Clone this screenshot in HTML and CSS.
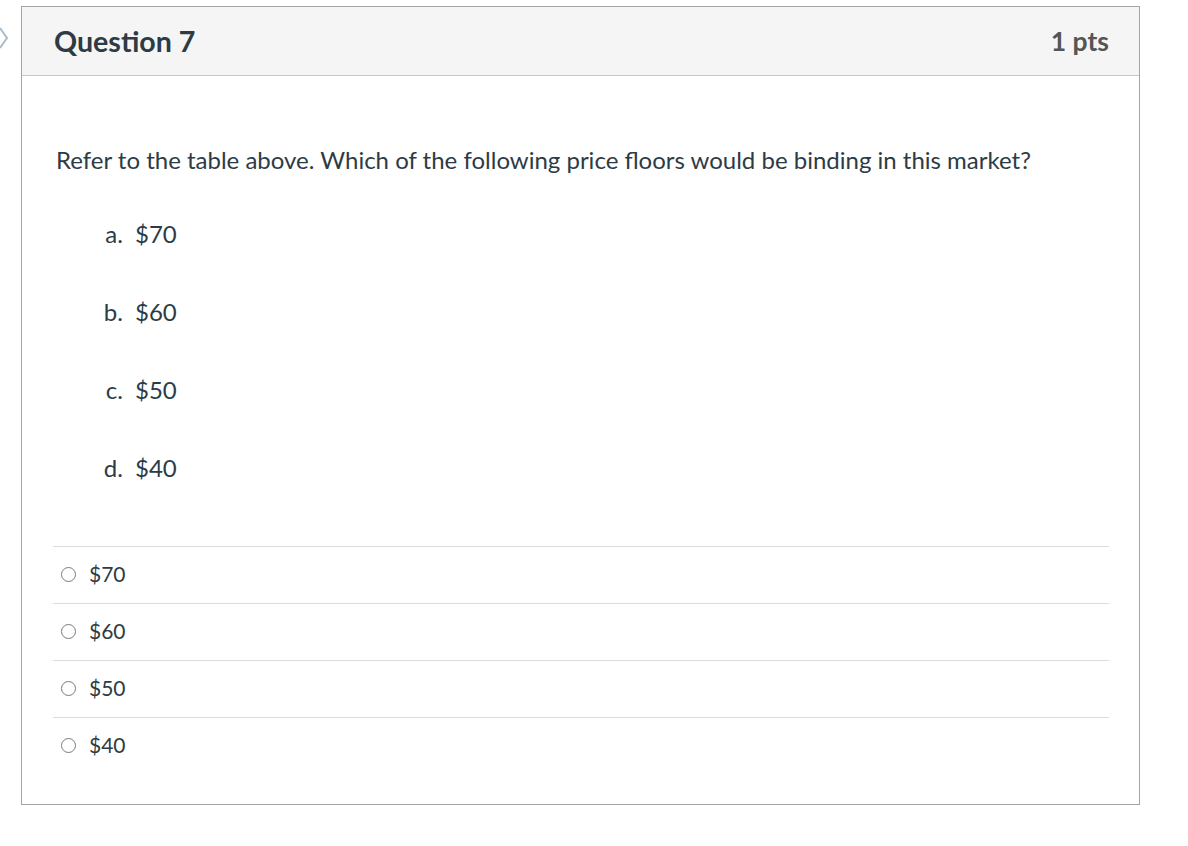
FILE: index.html
```html
<!DOCTYPE html>
<html>
<head>
<meta charset="utf-8">
<link rel="stylesheet" href="styles.css">
</head>
<body>
<div class="page">
  <svg class="chev" width="10" height="22" viewBox="0 0 10 22"><path d="M1 1 L8 11 L1 21" fill="none" stroke="#a9bccb" stroke-width="2"/></svg>
  <div class="question">
    <div class="header">
      <span class="title">Question 7</span>
      <span class="pts">1 pts</span>
    </div>
    <div class="body">
      <p class="qtext">Refer to the table above. Which of the following price floors would be binding in this market?</p>
      <ol class="choices">
        <li>$70</li>
        <li>$60</li>
        <li>$50</li>
        <li>$40</li>
      </ol>
      <div class="answers">
        <label class="answer"><span class="radio"></span><span>$70</span></label>
        <label class="answer"><span class="radio"></span><span>$60</span></label>
        <label class="answer"><span class="radio"></span><span>$50</span></label>
        <label class="answer"><span class="radio"></span><span>$40</span></label>
      </div>
    </div>
  </div>
</div>
</body>
</html>
```
FILE: styles.css
```css
html, body {
  margin: 0;
  padding: 0;
  background: #fff;
}
body {
  font-family: Lato, "Open Sans", sans-serif;
  color: #2d3b45;
}
.page {
  position: relative;
  padding: 6px 0 0 21px;
}
.chev {
  position: absolute;
  left: -1px;
  top: 27px;
}
.question {
  width: 1117px;
  border: 1px solid #a5a5a5;
}
.header {
  height: 68px;
  background: #f5f5f5;
  border-bottom: 1px solid #c7c7c7;
  display: flex;
  align-items: center;
  justify-content: space-between;
  padding: 0 30px 0 32px;
}
.title {
  font-weight: 700;
  font-size: 28.6px;
  color: #2d3b45;
}
.pts {
  font-weight: 700;
  font-size: 26.5px;
  color: #555;
}
.body {
  padding: 0 30px 0 31px;
}
.qtext {
  margin: 0;
  padding-top: 70px;
  font-size: 24px;
  line-height: 28px;
  padding-left: 3px;
}
.choices {
  list-style: lower-alpha;
  margin: 0;
  padding: 46px 0 0 76px;
  font-size: 24px;
}
.choices li {
  line-height: 28px;
  margin-bottom: 50px;
  padding-left: 6px;
}
.choices li:last-child {
  margin-bottom: 0;
}
.answers {
  margin-top: 64px;
  padding-bottom: 30px;
}
.answer {
  display: flex;
  align-items: center;
  gap: 13px;
  height: 53px;
  padding-bottom: 3px;
  border-top: 1px solid #dcdcdc;
  font-size: 21px;
  padding-left: 8px;
}
.radio {
  flex-shrink: 0;
  box-sizing: border-box;
  width: 15px;
  height: 15px;
  margin-top: 2px;
  border: 1.5px solid #7a7a7a;
  border-radius: 50%;
}
```
